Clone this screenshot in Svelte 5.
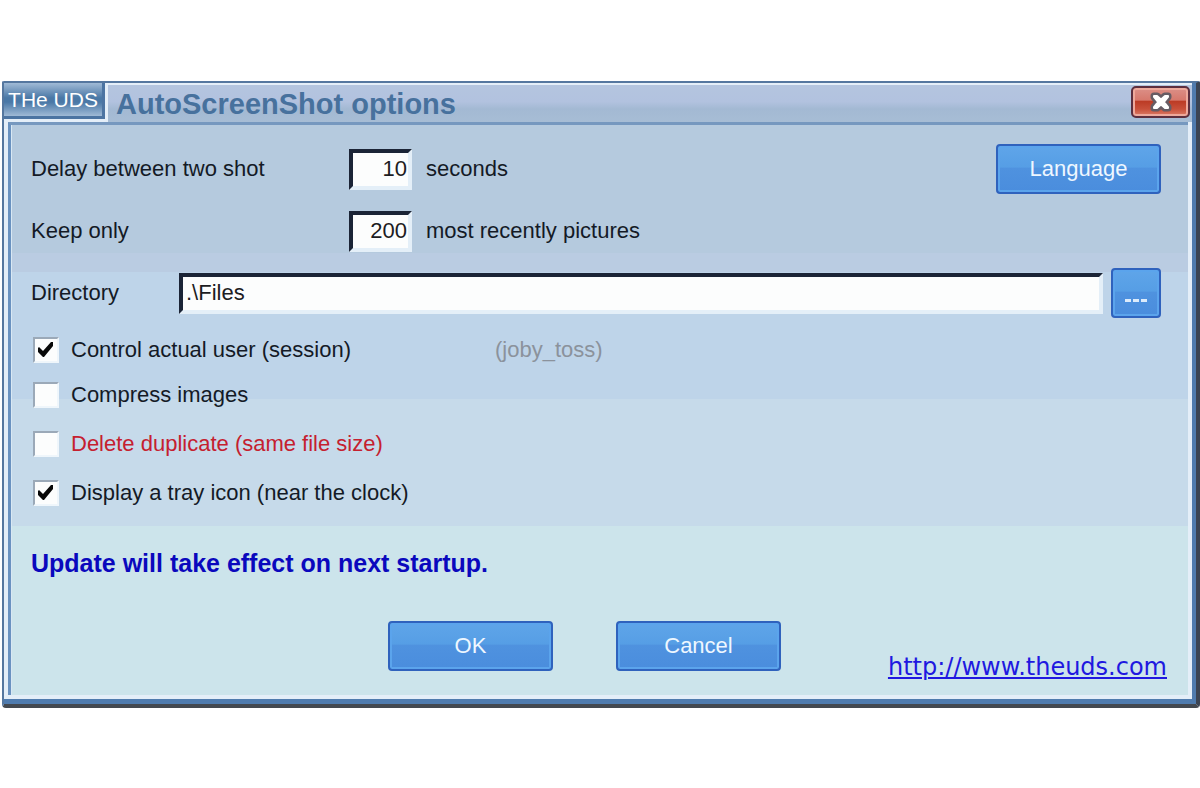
<script>
  let delay = $state('10');
  let keep = $state('200');
  let directory = $state('.\\Files');
  let session = $state(true);
  let compress = $state(false);
  let duplicate = $state(false);
  let tray = $state(true);
</script>

<main class="window">
  <header class="titlebar">
    <span class="logo">THe UDS</span>
    <h1>AutoScreenShot options</h1>
    <button class="close" type="button" aria-label="Close">
      <svg width="26" height="20" viewBox="0 0 26 20" aria-hidden="true">
        <path d="M6 4h3l4 3.5L17 4h3v1l-4 5 4 5v1h-3l-4-3.5L9 16H6v-1l4-5-4-5z" fill="#665c64" stroke="#665c64" stroke-width="7" stroke-linejoin="round" />
        <path d="M6 4h3l4 3.5L17 4h3v1l-4 5 4 5v1h-3l-4-3.5L9 16H6v-1l4-5-4-5z" fill="#fff" stroke="#fff" stroke-width="2" stroke-linejoin="round" />
      </svg>
    </button>
  </header>

  <form class="panel" onsubmit={(e) => e.preventDefault()}>
    <div class="row">
      <label class="wide" for="delay">Delay between two shot</label>
      <input class="field number" id="delay" type="text" bind:value={delay} />
      <span class="unit">seconds</span>
      <button class="btn push" type="button">Language</button>
    </div>
    <div class="row">
      <label class="wide" for="keep">Keep only</label>
      <input class="field number" id="keep" type="text" bind:value={keep} />
      <span class="unit">most recently pictures</span>
    </div>
    <div class="row">
      <label class="narrow" for="directory">Directory</label>
      <input class="field path" id="directory" type="text" bind:value={directory} />
      <button class="btn browse" type="button" aria-label="Browse">
        <svg width="22" height="3" viewBox="0 0 22 3" aria-hidden="true">
          <path d="M0 1.5h6M8 1.5h6M16 1.5h6" stroke="#dcebfb" stroke-width="3" />
        </svg>
      </button>
    </div>

    <div class="session">
      <label class="check"><input type="checkbox" bind:checked={session} />Control actual user (session)</label>
      <span class="user">(joby_toss)</span>
    </div>
    <div class="checks">
      <label class="check"><input type="checkbox" bind:checked={compress} />Compress images</label>
      <label class="check red"><input type="checkbox" bind:checked={duplicate} />Delete duplicate (same file size)</label>
      <label class="check"><input type="checkbox" bind:checked={tray} />Display a tray icon (near the clock)</label>
    </div>

    <p class="note">Update will take effect on next startup.</p>

    <footer>
      <div class="actions">
        <button class="btn" type="submit">OK</button>
        <button class="btn" type="button">Cancel</button>
      </div>
      <a href="http://www.theuds.com">http://www.theuds.com</a>
    </footer>
  </form>
</main>

<style>
  :global(body) {
    margin: 0;
    background: #fff;
  }
  * {
    box-sizing: border-box;
  }
  .window {
    margin: 81px 0 0 2px;
    font-family: "Liberation Sans", Arial, sans-serif;
    font-size: 22px;
    line-height: 28px;
    color: #141a26;
    background: #e4eef8;
    border: 2px solid #55779f;
    border-right: 4px solid #3b4453;
    border-bottom: 4px solid #43484f;
    border-radius: 2px 2px 4px 4px;
    box-shadow: inset -4px -5px 0 #4f7bae;
    padding: 0 8px 9px 4px;
  }
  .titlebar {
    display: flex;
    align-items: flex-start;
    height: 39px;
    margin: 0 -4px 0 -4px;
    padding-right: 2px;
    border-top: 2px solid #e4eef8;
    background: linear-gradient(#b4c5df, #b2c2df 45%, #a3b9d3 65%, #a7bdd5);
  }
  .logo {
    width: 101px;
    height: 36px;
    margin-top: -2px;
    border: solid #4c74a2;
    border-width: 0 3px 3px 0;
    outline: 3px solid #e4eef8;
    clip-path: inset(0 -3px -3px 0);
    background: linear-gradient(#a0bad6, #4a78a6 45%, #4a78a6 58%, #a0bad6);
    color: #fff;
    font-size: 21px;
    line-height: 34px;
    text-align: center;
    white-space: nowrap;
  }
  h1 {
    flex: 1;
    margin: 0 0 0 11px;
    font-size: 29px;
    line-height: 38px;
    color: #47719d;
  }
  .close {
    display: grid;
    place-items: center;
    width: 59px;
    height: 32px;
    margin-top: 1px;
    padding: 0;
    border: 2px solid #5c2f3e;
    border-radius: 5px;
    box-shadow: inset 0 0 0 2px #eda99c;
    background: linear-gradient(#dc9088, #d6786c 44%, #bb3a24 46%, #c8503a 75%, #dc7d68);
  }
  .panel {
    padding: 19px 21px 24px 20px;
    border-top: 3px solid #7698bf;
    border-left: 3px solid #6a92c0;
    box-shadow: inset 1px 0 0 #d9e8f4;
    background: linear-gradient(#b5cade 128px, #bacce2 128px, #bacce2 147px, #bed4e9 147px, #bed4e9 274px, #c6daea 274px, #c6daea 401px, #cce4eb 401px);
  }
  .row {
    display: flex;
    align-items: center;
    height: 50px;
    margin-bottom: 12px;
    padding-right: 6px;
  }
  .wide {
    width: 318px;
  }
  .narrow {
    width: 148px;
  }
  .field {
    height: 41px;
    padding: 0 1px 0 3px;
    border: 4px solid;
    border-color: #1b2436 #e4eff8 #e4eff8 #1b2436;
    border-radius: 0;
    outline: 0;
    background: #fcfdfd;
    color: #1c1c22;
    font: inherit;
  }
  .number {
    width: 63px;
    text-align: right;
  }
  .path {
    flex: 1;
    min-width: 0;
  }
  .unit {
    margin-left: 14px;
  }
  .btn {
    width: 165px;
    height: 50px;
    padding: 0;
    border: 2px solid #2f62bd;
    border-radius: 4px;
    box-shadow: inset 0 0 0 2px #5ba4ec;
    background: linear-gradient(#5fa5e9, #569ee5 46%, #4f92df 48%, #4a8ddd);
    color: #eef7ff;
    font: inherit;
  }
  .push {
    margin-left: auto;
  }
  .browse {
    width: 50px;
    margin-left: 8px;
    padding-top: 10px;
    line-height: 0;
  }
  .session {
    display: flex;
    align-items: center;
    margin: 17px 0 16px;
  }
  .session .check {
    width: 464px;
  }
  .user {
    color: #8b929c;
  }
  .checks {
    display: grid;
    gap: 20px;
    justify-items: start;
  }
  .check {
    display: flex;
    align-items: center;
    height: 29px;
  }
  .check input {
    appearance: none;
    width: 26px;
    height: 26px;
    margin: 0 12px 0 2px;
    border: 2px solid;
    border-color: #9ba9b8 #eff6fb #eff6fb #9ba9b8;
    background: #fcfdfd;
  }
  .check input:checked {
    background: #fcfdfd url("data:image/svg+xml,%3Csvg xmlns='http://www.w3.org/2000/svg' viewBox='0 0 22 22'%3E%3Cpath d='M3 9l1-1 4 4 8-9h2v4L9 18H8l-5-5z' fill='%23080808'/%3E%3C/svg%3E") center / 22px 22px no-repeat;
  }
  .red {
    color: #c5202f;
  }
  .note {
    margin: 41px 0 43px;
    font-size: 25px;
    font-weight: bold;
    line-height: 30px;
    color: #0a08bd;
  }
  footer {
    display: grid;
    grid-template-columns: 357fr auto 386fr;
    align-items: end;
  }
  .actions {
    grid-column: 2;
    display: flex;
    gap: 63px;
  }
  a {
    justify-self: end;
    margin-bottom: -10px;
    font-family: "DejaVu Sans", Verdana, sans-serif;
    font-size: 24px;
    color: #2018e0;
    text-decoration-thickness: 2px;
    text-underline-offset: 2px;
  }
</style>
